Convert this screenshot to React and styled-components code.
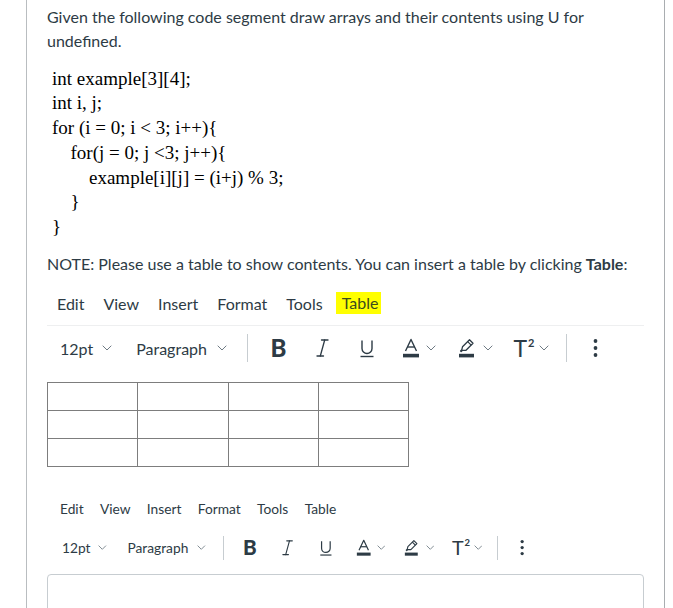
import React from "react";
import styled, { createGlobalStyle, css } from "styled-components";

const Global = createGlobalStyle`
  html, body { margin: 0; padding: 0; background: #fff; }
  body { font-family: Lato, "Noto Sans", sans-serif; color: #2d3b45; }
`;

const Page = styled.div`
  padding-left: 26px;
`;

const Card = styled.div`
  box-sizing: border-box;
  width: 639px;
  min-height: 608px;
  border-left: 1px solid #b9bdc0;
  border-right: 1px solid #a9adb0;
  padding: 5px 20px 0 20px;
  background: #fff;
  overflow: hidden;
`;

const Prose = styled.p`
  margin: 0;
  font-size: 16px;
  line-height: 24px;
  color: #2d3b45;
  strong { font-weight: 700; }
`;

const Code = styled.div`
  margin: 13.5px 0 12px;
  padding-left: 5px;
  font-family: "Liberation Serif", "Times New Roman", serif;
  font-size: 19px;
  line-height: 24.8px;
  color: #000;
`;

const CodeLine = styled.div`
  white-space: pre;
  padding-left: ${(p) => p.$indent * 18.5}px;
`;

const Chrome = styled.div`
  margin-top: ${(p) => p.$mt}px;
`;

const MenuBar = styled.div`
  display: flex;
  align-items: center;
  gap: ${(p) => 19 * p.$k}px;
  height: ${(p) => 30 * p.$k}px;
  padding-left: ${(p) => p.$pl}px;
  font-size: ${(p) => 16 * p.$k}px;
  color: #2d3b45;
`;

const MenuItem = styled.span`
  display: inline-block;
  ${(p) =>
    p.$hl &&
    css`
      background: #ffff00;
      line-height: 22px;
      padding: 0 3px 0 6px;
      margin-left: -6px;
      color: #3b4a1e;
    `}
`;

const Separator = styled.div`
  height: 1px;
  margin-top: ${(p) => 7 * p.$k}px;
  background: ${(p) => p.$color};
`;

const Toolbar = styled.div`
  display: flex;
  align-items: center;
  height: ${(p) => 44 * p.$k}px;
  padding-left: ${(p) => p.$pl}px;
  font-size: ${(p) => 16 * p.$k}px;
  color: #2d3b45;
`;

const Select = styled.span`
  display: inline-flex;
  align-items: center;
  gap: ${(p) => p.$gap * p.$k}px;
  margin-left: ${(p) => p.$ml * p.$k}px;
  white-space: nowrap;
`;

const Btn = styled.span`
  display: inline-flex;
  align-items: center;
  gap: ${(p) => (p.$gap || 0) * p.$k}px;
  margin-left: ${(p) => p.$ml * p.$k}px;
`;

const IconBox = styled.span`
  display: inline-flex;
  align-items: center;
  justify-content: center;
  width: ${(p) => p.$w * p.$k}px;
  height: ${(p) => 22 * p.$k}px;
`;

const BoldGlyph = styled.span`
  font-family: Lato, "Noto Sans", sans-serif;
  font-weight: 900;
  font-size: ${(p) => 24 * p.$k}px;
  line-height: 1;
  color: #2d3b45;
`;

const SuperGlyph = styled.span`
  font-family: Lato, "Noto Sans", sans-serif;
  font-weight: 400;
  font-size: ${(p) => 23 * p.$k}px;
  line-height: 1;
  color: #2d3b45;
  white-space: nowrap;
  sup {
    font-weight: 700;
    font-size: ${(p) => 11 * p.$k}px;
    vertical-align: top;
    position: relative;
    top: 0;
    margin-left: ${(p) => 1 * p.$k}px;
  }
`;

const VDivider = styled.span`
  width: 1px;
  height: ${(p) => 28 * p.$k}px;
  background: #c7cdd1;
  margin-left: ${(p) => p.$ml * p.$k}px;
`;

const Grid = styled.table`
  border-collapse: collapse;
  width: 362px;
  margin-top: 12px;
  td {
    border: 1px solid #7d7d7d;
    height: 27px;
    padding: 0;
    width: 25%;
  }
`;

const EditArea = styled.div`
  margin-top: 7px;
  height: 120px;
  border: 1px solid #c7cdd1;
  border-radius: 4px;
`;

const Chevron = ({ k }) => (
  <svg width={10 * k} height={6 * k} viewBox="0 0 10 6">
    <polyline points="0.7,0.7 5,5 9.3,0.7" fill="none" stroke="#6f7b84" strokeWidth="1" />
  </svg>
);

const ItalicIcon = ({ k }) => (
  <svg width={13 * k} height={18 * k} viewBox="0 0 13 18">
    <g stroke="#2d3b45" strokeWidth="1.3" fill="none" strokeLinecap="round">
      <line x1="5.5" y1="1" x2="12" y2="1" />
      <line x1="1" y1="17" x2="7.5" y2="17" />
      <line x1="8.7" y1="1" x2="4.3" y2="17" />
    </g>
  </svg>
);

const UnderlineIcon = ({ k }) => (
  <svg width={16 * k} height={19 * k} viewBox="0 0 16 19">
    <g stroke="#2d3b45" strokeWidth="1.4" fill="none">
      <path d="M3 1.5 V9.5 A5 5 0 0 0 13 9.5 V1.5" />
      <line x1="1.5" y1="17.5" x2="14.5" y2="17.5" />
    </g>
  </svg>
);

const ColorIcon = ({ k }) => (
  <svg width={18 * k} height={20 * k} viewBox="0 0 18 20">
    <g stroke="#2d3b45" strokeWidth="1.4" fill="none" strokeLinejoin="round">
      <path d="M3.5 13 L9 1.5 L14.5 13" />
      <line x1="5.4" y1="9" x2="12.6" y2="9" />
    </g>
    <rect x="1" y="15.8" width="16" height="3.6" fill="#2d3b45" />
  </svg>
);

const HighlightIcon = ({ k }) => (
  <svg width={17 * k} height={20 * k} viewBox="0 0 17 20">
    <g stroke="#2d3b45" strokeWidth="1.3" fill="none" strokeLinejoin="round">
      <path d="M11.5 1.8 L15 5.3 L8 12.3 L4.5 12.3 L3.2 13.6 L2.6 13 L3.8 11.7 L4.5 8.8 Z" />
      <line x1="9.7" y1="3.6" x2="13.2" y2="7.1" />
    </g>
    <rect x="1" y="15.8" width="15" height="3.6" fill="#2d3b45" />
  </svg>
);

const DotsIcon = ({ k }) => (
  <svg width={5 * k} height={20 * k} viewBox="0 0 5 20">
    <circle cx="2.5" cy="3" r="1.9" fill="#2d3b45" />
    <circle cx="2.5" cy="10" r="1.9" fill="#2d3b45" />
    <circle cx="2.5" cy="17" r="1.9" fill="#2d3b45" />
  </svg>
);

const menuItems = ["Edit", "View", "Insert", "Format", "Tools", "Table"];

const EditorChrome = ({ k, menuPl, toolPl, mt, sepColor, highlightTable }) => (
  <Chrome $mt={mt}>
    <MenuBar $k={k} $pl={menuPl}>
      {menuItems.map((m) => (
        <MenuItem key={m} $hl={highlightTable && m === "Table"}>
          {m}
        </MenuItem>
      ))}
    </MenuBar>
    <Separator $k={k} $color={sepColor} />
    <Toolbar $k={k} $pl={toolPl}>
      <Select $k={k} $ml={0} $gap={9}>
        12pt <Chevron k={k} />
      </Select>
      <Select $k={k} $ml={24} $gap={10}>
        Paragraph <Chevron k={k} />
      </Select>
      <VDivider $k={k} $ml={20} />
      <Btn $k={k} $ml={23}>
        <IconBox $k={k} $w={15}>
          <BoldGlyph $k={k}>B</BoldGlyph>
        </IconBox>
      </Btn>
      <Btn $k={k} $ml={30}>
        <IconBox $k={k} $w={13}>
          <ItalicIcon k={k} />
        </IconBox>
      </Btn>
      <Btn $k={k} $ml={30}>
        <IconBox $k={k} $w={16}>
          <UnderlineIcon k={k} />
        </IconBox>
      </Btn>
      <Btn $k={k} $ml={27} $gap={6}>
        <IconBox $k={k} $w={18}>
          <ColorIcon k={k} />
        </IconBox>
        <Chevron k={k} />
      </Btn>
      <Btn $k={k} $ml={22} $gap={8}>
        <IconBox $k={k} $w={17}>
          <HighlightIcon k={k} />
        </IconBox>
        <Chevron k={k} />
      </Btn>
      <Btn $k={k} $ml={20} $gap={4}>
        <IconBox $k={k} $w={22}>
          <SuperGlyph $k={k}>
            T<sup>2</sup>
          </SuperGlyph>
        </IconBox>
        <Chevron k={k} />
      </Btn>
      <VDivider $k={k} $ml={17} />
      <Btn $k={k} $ml={26}>
        <IconBox $k={k} $w={5}>
          <DotsIcon k={k} />
        </IconBox>
      </Btn>
    </Toolbar>
  </Chrome>
);

const code = [
  [0, "int example[3][4];"],
  [0, "int i, j;"],
  [0, "for (i = 0; i < 3; i++){"],
  [1, "for(j = 0; j <3; j++){"],
  [2, "example[i][j] = (i+j) % 3;"],
  [1, "}"],
  [0, "}"],
];

export default function App() {
  return (
    <Page>
      <Global />
      <Card>
        <Prose>
          Given the following code segment draw arrays and their contents using U for undefined.
        </Prose>
        <Code>
          {code.map(([ind, t], i) => (
            <CodeLine key={i} $indent={ind}>
              {t}
            </CodeLine>
          ))}
        </Code>
        <Prose>
          NOTE: Please use a table to show contents. You can insert a table by clicking <strong>Table</strong>:
        </Prose>
        <EditorChrome k={1} menuPl={10} toolPl={13} mt={12} sepColor="#eeeff0" highlightTable />
        <Grid>
          <tbody>
            {[0, 1, 2].map((r) => (
              <tr key={r}>
                {[0, 1, 2, 3].map((c) => (
                  <td key={c} />
                ))}
              </tr>
            ))}
          </tbody>
        </Grid>
        <EditorChrome k={0.86} menuPl={13} toolPl={15} mt={29} sepColor="transparent" />
        <EditArea />
      </Card>
    </Page>
  );
}
